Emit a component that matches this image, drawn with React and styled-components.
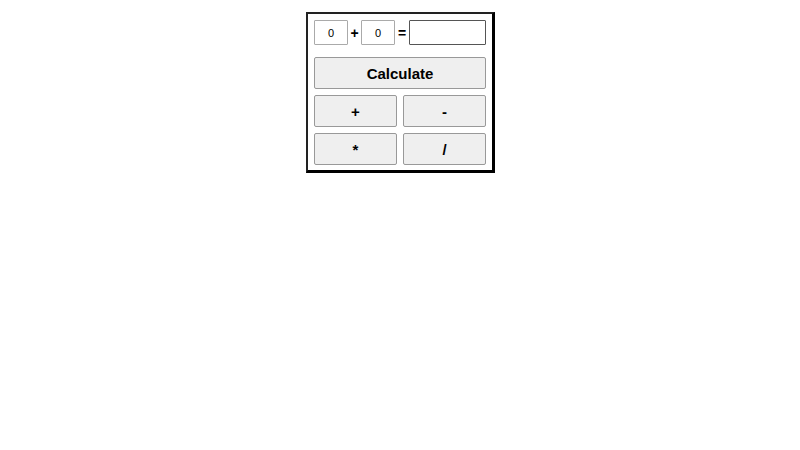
import React, {useState} from 'react';
import styled, {createGlobalStyle} from 'styled-components';

const GlobalStyle = createGlobalStyle`
  body {
    margin: 0;
    background: #fff;
    font-family: "Liberation Sans", Arial, sans-serif;
  }
`;

const Page = styled.div`
  display: flex;
  justify-content: center;
  padding-top: 12px;
`;

const Calculator = styled.div`
  box-sizing: border-box;
  width: 189px;
  margin-left: 1px;
  padding: 6px 6px 5px;
  border: 2px solid #222;
  border-right-width: 3px;
  border-bottom-width: 3px;
  border-right-color: #000;
  border-bottom-color: #000;
  background: #fff;
`;

const Equation = styled.div`
  display: flex;
  align-items: center;
  height: 25px;
  margin-bottom: 12px;
`;

const NumberInput = styled.input`
  box-sizing: border-box;
  width: ${p => p.$width || 34}px;
  height: 25px;
  margin: 0;
  padding: 0;
  text-align: center;
  font-family: "Liberation Sans", Arial, sans-serif;
  font-size: 11px;
  color: #000;
  border: 1px solid ${p => p.$dark ? '#555' : '#aaa'};
  border-radius: 1px;
  outline: none;
`;

const Sign = styled.span`
  width: ${p => p.$width || 13}px;
  text-align: center;
  font-size: 14px;
  font-weight: bold;
`;

const Buttons = styled.div`
  display: grid;
  grid-template-columns: 1fr 1fr;
  gap: 6px 6px;
`;

const Button = styled.button`
  box-sizing: border-box;
  grid-column: ${p => p.$wide ? 'span 2' : 'auto'};
  height: 32px;
  margin: 0;
  padding: 0;
  background: #efefef;
  border: 1px solid #999;
  border-radius: 2px;
  font-family: "Liberation Sans", Arial, sans-serif;
  font-size: 15px;
  font-weight: bold;
  color: #000;
  cursor: pointer;
`;

export default function App() {
  const [a, setA] = useState('0');
  const [b, setB] = useState('0');
  const [op, setOp] = useState('+');
  const [result, setResult] = useState('');

  const calculate = () => {
    const x = parseFloat(a) || 0;
    const y = parseFloat(b) || 0;
    const r = op === '+' ? x + y : op === '-' ? x - y : op === '*' ? x * y : x / y;
    setResult(String(r));
  };

  return (
    <Page>
      <GlobalStyle/>
      <Calculator>
        <Equation>
          <NumberInput value={a} onChange={e => setA(e.target.value)}/>
          <Sign>{op}</Sign>
          <NumberInput value={b} onChange={e => setB(e.target.value)}/>
          <Sign $width={14}>=</Sign>
          <NumberInput $width={77} $dark value={result} readOnly/>
        </Equation>
        <Buttons>
          <Button $wide onClick={calculate}>Calculate</Button>
          <Button onClick={() => setOp('+')}>+</Button>
          <Button onClick={() => setOp('-')}>-</Button>
          <Button onClick={() => setOp('*')}>*</Button>
          <Button onClick={() => setOp('/')}>/</Button>
        </Buttons>
      </Calculator>
    </Page>
  );
}
